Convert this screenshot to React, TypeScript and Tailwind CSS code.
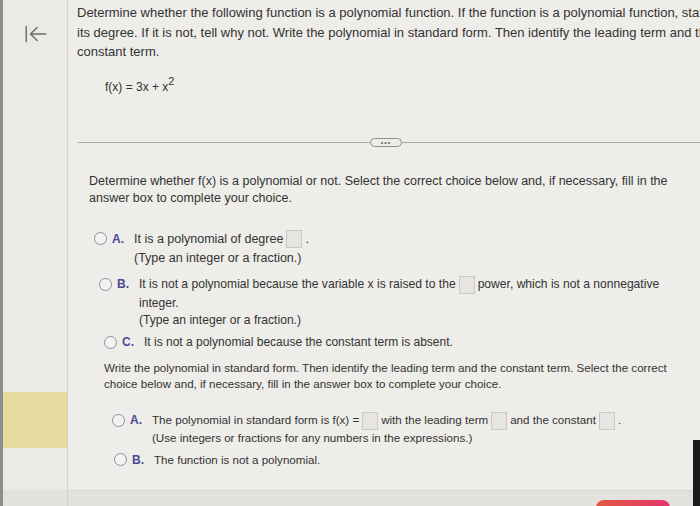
import { ArrowLeftToLine } from 'lucide-react'

function Radio() {
  return <span className="inline-block w-[13px] h-[13px] rounded-full border border-[#8a8fa8] bg-[#f4f3f0] shrink-0" />
}

function Box() {
  return <span className="inline-block w-[16px] h-[18px] border border-[#c9c9c9] bg-[#e6e5e2] align-middle mx-[3px]" />
}

function Choice({ letter, children, pad }: { letter: string; children: React.ReactNode; pad: string }) {
  return (
    <div className={`flex items-start ${pad}`}>
      <div className="flex items-center gap-[5px] h-[18px]">
        <Radio />
        <span className="text-[#4b4a96] font-bold text-[12px] w-[22px]">{letter}</span>
      </div>
      <div className="leading-[18px] whitespace-nowrap">{children}</div>
    </div>
  )
}

export default function App() {
  return (
    <div
      className="w-[700px] h-[506px] flex overflow-hidden bg-[#eeede9] text-[#333] text-[12.5px] relative"
      style={{ fontFamily: '"Liberation Sans", Arial, sans-serif' }}
    >
      <div className="w-[68px] shrink-0 flex flex-col bg-[#ebeae6] border-r border-[#d2d1cc] border-l-[3px] border-l-[#8d8d8b]">
        <div className="h-[68px] flex items-center justify-center pl-[2px]">
          <ArrowLeftToLine className="w-[26px] h-[26px] text-[#6a6a6a] -scale-x-100 rotate-180" strokeWidth={1.3} />
        </div>
        <div className="h-[324px]" />
        <div className="h-[56px] bg-[#e6da9f]" />
        <div className="flex-1" />
        <div className="h-[16px] bg-[#e3e2de]" />
      </div>

      <div className="flex-1 flex flex-col min-w-0">
        <div className="pl-[9px] pt-[3px] leading-[19.5px] text-[13px] whitespace-nowrap">
          <div>Determine whether the following function is a polynomial function. If the function is a polynomial function, state</div>
          <div>its degree. If it is not, tell why not. Write the polynomial in standard form. Then identify the leading term and the</div>
          <div>constant term.</div>
        </div>

        <div className="pl-[37px] mt-[16px] text-[12px]">
          f(x) = 3x + x<sup className="text-[11px] relative -top-[6px]">2</sup>
        </div>

        <div className="mt-[42px] flex items-center pl-[10px]">
          <div className="w-[292px] h-px bg-[#a9a8a4]" />
          <div className="w-[32px] h-[9px] rounded-full border border-[#8f8e8b] flex items-center justify-center text-[7px] leading-none text-[#666] tracking-[1px]">•••</div>
          <div className="flex-1 h-px bg-[#a9a8a4]" />
        </div>

        <div className="pl-[21px] mt-[26px] leading-[17px] whitespace-nowrap">
          <div>Determine whether f(x) is a polynomial or not. Select the correct choice below and, if necessary, fill in the</div>
          <div>answer box to complete your choice.</div>
        </div>

        <div className="mt-[23px] flex flex-col">
          <Choice letter="A." pad="pl-[26px]">
            <div>It is a polynomial of degree<Box />.</div>
            <div className="mt-[1px]">(Type an integer or a fraction.)</div>
          </Choice>
          <div className="mt-[8px] text-[12.1px]">
            <Choice letter="B." pad="pl-[31px]">
              <div>It is not a polynomial because the variable x is raised to the<Box />power, which is not a nonnegative</div>
              <div>integer.</div>
              <div className="-mt-[1px]">(Type an integer or a fraction.)</div>
            </Choice>
          </div>
          <div className="mt-[4px] text-[12px]">
            <Choice letter="C." pad="pl-[36px]">
              <div>It is not a polynomial because the constant term is absent.</div>
            </Choice>
          </div>
        </div>

        <div className="text-[11.6px] flex flex-col">
          <div className="pl-[36px] mt-[9px] leading-[16px] whitespace-nowrap">
            <div>Write the polynomial in standard form. Then identify the leading term and the constant term. Select the correct</div>
            <div>choice below and, if necessary, fill in the answer box to complete your choice.</div>
          </div>

          <div className="mt-[19px] flex flex-col">
            <Choice letter="A." pad="pl-[44px]">
              <div>The polynomial in standard form is f(x) =<Box />with the leading term<Box />and the constant<Box />.</div>
              <div className="-mt-[1px]">(Use integers or fractions for any numbers in the expressions.)</div>
            </Choice>
            <div className="mt-[4px]">
              <Choice letter="B." pad="pl-[46px]">
                <div>The function is not a polynomial.</div>
              </Choice>
            </div>
          </div>
        </div>

        <div className="flex-1" />
        <div className="h-[16px] bg-[#e3e2de] border-t border-[#d8d7d2] flex justify-end pr-[30px] pt-[9px]">
          <div className="w-[74px] h-[10px] rounded-t-[8px] bg-gradient-to-r from-[#e5573f] to-[#e0336a]" />
        </div>
      </div>

      <div className="absolute right-0 top-[440px] w-[7px] h-[66px] bg-[#1c1c1e]" />
    </div>
  )
}
